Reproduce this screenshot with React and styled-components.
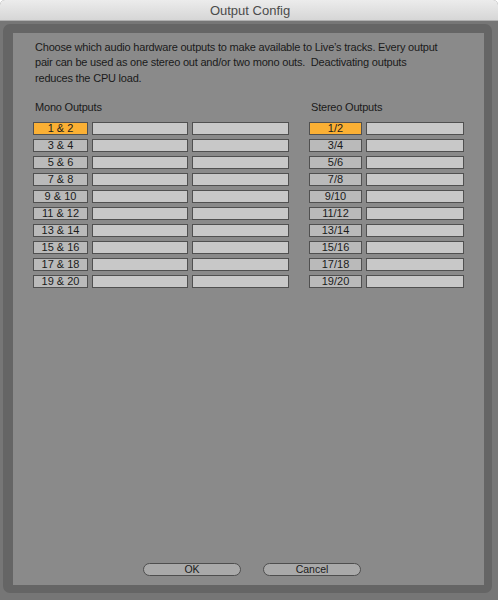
import styled, { createGlobalStyle } from 'styled-components';

const GlobalStyle = createGlobalStyle`
  html, body {
    margin: 0;
    padding: 0;
    background: #ffffff;
  }
  body {
    font-family: "Liberation Sans", Arial, sans-serif;
  }
`;

const Window = styled.div`
  width: 498px;
  height: 600px;
  display: flex;
  flex-direction: column;
  background: #767676;
  border-radius: 5px 5px 0 0;
  overflow: hidden;
`;

const TitleBar = styled.div`
  height: 21px;
  flex: none;
  display: flex;
  align-items: center;
  justify-content: center;
  background: linear-gradient(#ececec, #d6d6d6);
  border-bottom: 1px solid #b0b0b0;
  box-sizing: border-box;
  font-size: 13px;
  color: #4b4b4b;
  padding-left: 2px;
`;

const Frame = styled.div`
  flex: 1;
  display: flex;
  margin: 3px 6px 7px 3px;
  padding: 9px 8px 8px 10px;
  background: #656565;
  border-radius: 7px;
`;

const Panel = styled.div`
  flex: 1;
  display: flex;
  flex-direction: column;
  background: #8a8a8a;
  padding: 7px 10px 9px 20px;
  color: #1a1a1a;
`;

const Intro = styled.p`
  margin: 0 0 14px 2px;
  font-size: 11px;
  letter-spacing: -0.2px;
  line-height: 15.3px;
`;

const Sections = styled.div`
  display: flex;
  gap: 20px;
`;

const Section = styled.div`
  display: flex;
  flex-direction: column;
`;

const Heading = styled.div`
  font-size: 11px;
  letter-spacing: -0.2px;
  line-height: 15px;
  padding-left: 2px;
  margin-bottom: 7.5px;
`;

const Rows = styled.div`
  display: flex;
  flex-direction: column;
  gap: 4px;
`;

const Row = styled.div`
  display: flex;
  gap: 4px;
`;

const Cell = styled.div`
  box-sizing: border-box;
  height: 13px;
  width: ${p => p.$w}px;
  border: 1px solid #505050;
  background: ${p => (p.$active ? '#fbb034' : p.$label ? '#bababa' : '#c8c8c8')};
  font-size: 11px;
  line-height: 11px;
  text-align: center;
  color: #1a1a1a;
`;

const Buttons = styled.div`
  margin-top: auto;
  display: flex;
  justify-content: center;
  gap: 22px;
  padding-right: 3px;
`;

const Button = styled.button`
  box-sizing: border-box;
  width: 98px;
  height: 13px;
  padding: 0;
  border: 1px solid #4e4e4e;
  border-radius: 7px;
  background: #a9a9a9;
  font-family: inherit;
  font-size: 10.5px;
  line-height: 11px;
  color: #1a1a1a;
`;

const mono = Array.from({ length: 10 }, (_, i) => `${i * 2 + 1} & ${i * 2 + 2}`);
const stereo = Array.from({ length: 10 }, (_, i) => `${i * 2 + 1}/${i * 2 + 2}`);

export default function App() {
  return (
    <>
      <GlobalStyle />
      <Window>
        <TitleBar>Output Config</TitleBar>
        <Frame>
          <Panel>
            <Intro>
              Choose which audio hardware outputs to make available to Live’s tracks. Every output
              <br />
              pair can be used as one stereo out and/or two mono outs.&nbsp; Deactivating outputs
              <br />
              reduces the CPU load.
            </Intro>
            <Sections>
              <Section>
                <Heading>Mono Outputs</Heading>
                <Rows>
                  {mono.map((name, i) => (
                    <Row key={name}>
                      <Cell $w={55} $label $active={i === 0}>{name}</Cell>
                      <Cell $w={96} />
                      <Cell $w={97} />
                    </Row>
                  ))}
                </Rows>
              </Section>
              <Section>
                <Heading>Stereo Outputs</Heading>
                <Rows>
                  {stereo.map((name, i) => (
                    <Row key={name}>
                      <Cell $w={53} $label $active={i === 0}>{name}</Cell>
                      <Cell $w={98} />
                    </Row>
                  ))}
                </Rows>
              </Section>
            </Sections>
            <Buttons>
              <Button>OK</Button>
              <Button>Cancel</Button>
            </Buttons>
          </Panel>
        </Frame>
      </Window>
    </>
  );
}
